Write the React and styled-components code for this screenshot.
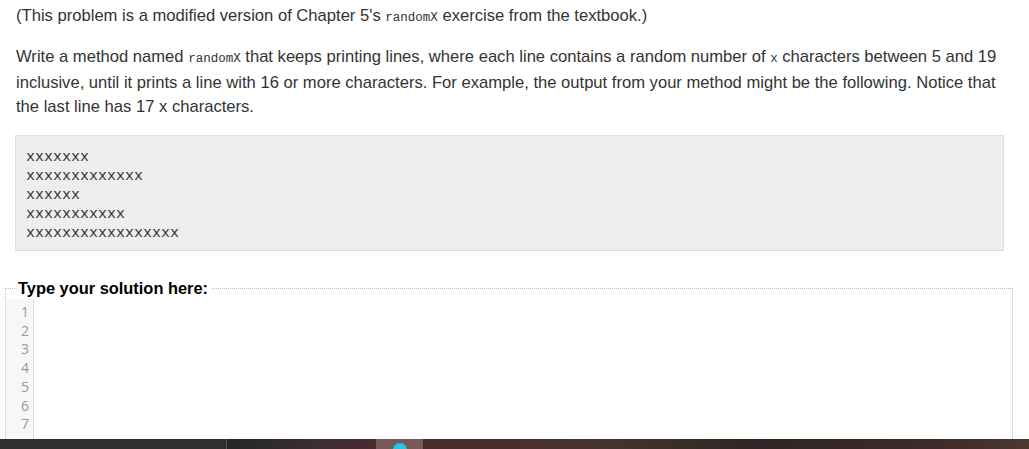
import React from 'react'
import styled, { createGlobalStyle } from 'styled-components'

const GlobalStyle = createGlobalStyle`
  html, body {
    margin: 0;
    padding: 0;
    background: #fff;
    overflow: hidden;
  }
  body {
    font-family: 'Liberation Sans', Arial, sans-serif;
    color: #333;
  }
`

const Page = styled.div`
  height: 449px;
  overflow: hidden;
  padding: 4px 25px 0 5px;
  box-sizing: border-box;
`

const Text = styled.p`
  margin: ${p => p.$top || 0}px 0 0 11px;
  font-size: 16.6px;
  line-height: 23.5px;
  color: #333;
`

const Code = styled.code`
  font-family: 'Liberation Mono', 'Courier New', monospace;
  font-size: 12.5px;
`

const Output = styled.pre`
  margin: 17px 0 0 10px;
  padding: 12px 10px 7px;
  background: #eee;
  border: 1px solid #ddd;
  font-family: 'Liberation Mono', 'Courier New', monospace;
  font-size: 15px;
  line-height: 19px;
  color: #333;
`

const Solution = styled.fieldset`
  margin: 28px -9px 0 0;
  padding: 0;
  border: 1px dotted #bbb;
  border-bottom: none;
`

const Legend = styled.legend`
  margin-left: 9px;
  padding: 0 3px;
  font-size: 16.4px;
  font-weight: bold;
  color: #000;
  line-height: 18px;
`

const Editor = styled.div`
  display: flex;
  margin-top: 2px;
  height: 200px;
`

const Gutter = styled.div`
  width: 28px;
  background: #f7f7f7;
  border-right: 1px solid #ddd;
  padding-top: 4px;
  box-sizing: border-box;
`

const LineNo = styled.div`
  font-family: 'Open Sans', sans-serif;
  font-size: 14px;
  line-height: 18.7px;
  color: #999;
  text-align: right;
  padding-right: 4px;
`

const Taskbar = styled.div`
  position: fixed;
  left: 0;
  right: 0;
  bottom: 0;
  height: 10px;
  display: flex;
`

const Segment = styled.div`
  width: ${p => p.$w}px;
  flex: ${p => (p.$w ? 'none' : '1')};
  background: ${p => p.$bg};
  border-left: ${p => (p.$edge ? '1px solid #555' : 'none')};
  position: relative;
  overflow: hidden;
`

const Dot = styled.div`
  position: absolute;
  left: 17px;
  top: 4px;
  width: 14px;
  height: 14px;
  border-radius: 50%;
  background: #2bc4e0;
`

const lines = ['xxxxxxx', 'xxxxxxxxxxxxx', 'xxxxxx', 'xxxxxxxxxxx', 'xxxxxxxxxxxxxxxxx']

export default function App() {
  return (
    <>
      <GlobalStyle />
      <Page>
        <Text>
          (This problem is a modified version of Chapter 5's <Code>randomX</Code> exercise from
          the textbook.)
        </Text>
        <Text $top={14}>
          Write a method named <Code>randomX</Code> that keeps printing lines, where each line
          contains a random number of <Code>x</Code> characters between 5 and 19 inclusive, until
          it prints a line with 16 or more characters. For example, the output from your method
          might be the following. Notice that the last line has 17 x characters.
        </Text>
        <Output>{lines.join('\n')}</Output>
        <Solution>
          <Legend>Type your solution here:</Legend>
          <Editor>
            <Gutter>
              {[1, 2, 3, 4, 5, 6, 7].map(n => (
                <LineNo key={n}>{n}</LineNo>
              ))}
            </Gutter>
          </Editor>
        </Solution>
      </Page>
      <Taskbar>
        <Segment $w={226} $bg="#2f2f2f" />
        <Segment $w={149} $bg="linear-gradient(90deg, #262626, #3a2e30 60%, #4a2a30)" $edge />
        <Segment $w={47} $bg="#765a5a">
          <Dot />
        </Segment>
        <Segment $bg="linear-gradient(90deg, #4a2a2e, #46342e 30%, #2e2624 55%, #3e2a2a 85%, #4a3830)" />
      </Taskbar>
    </>
  )
}
